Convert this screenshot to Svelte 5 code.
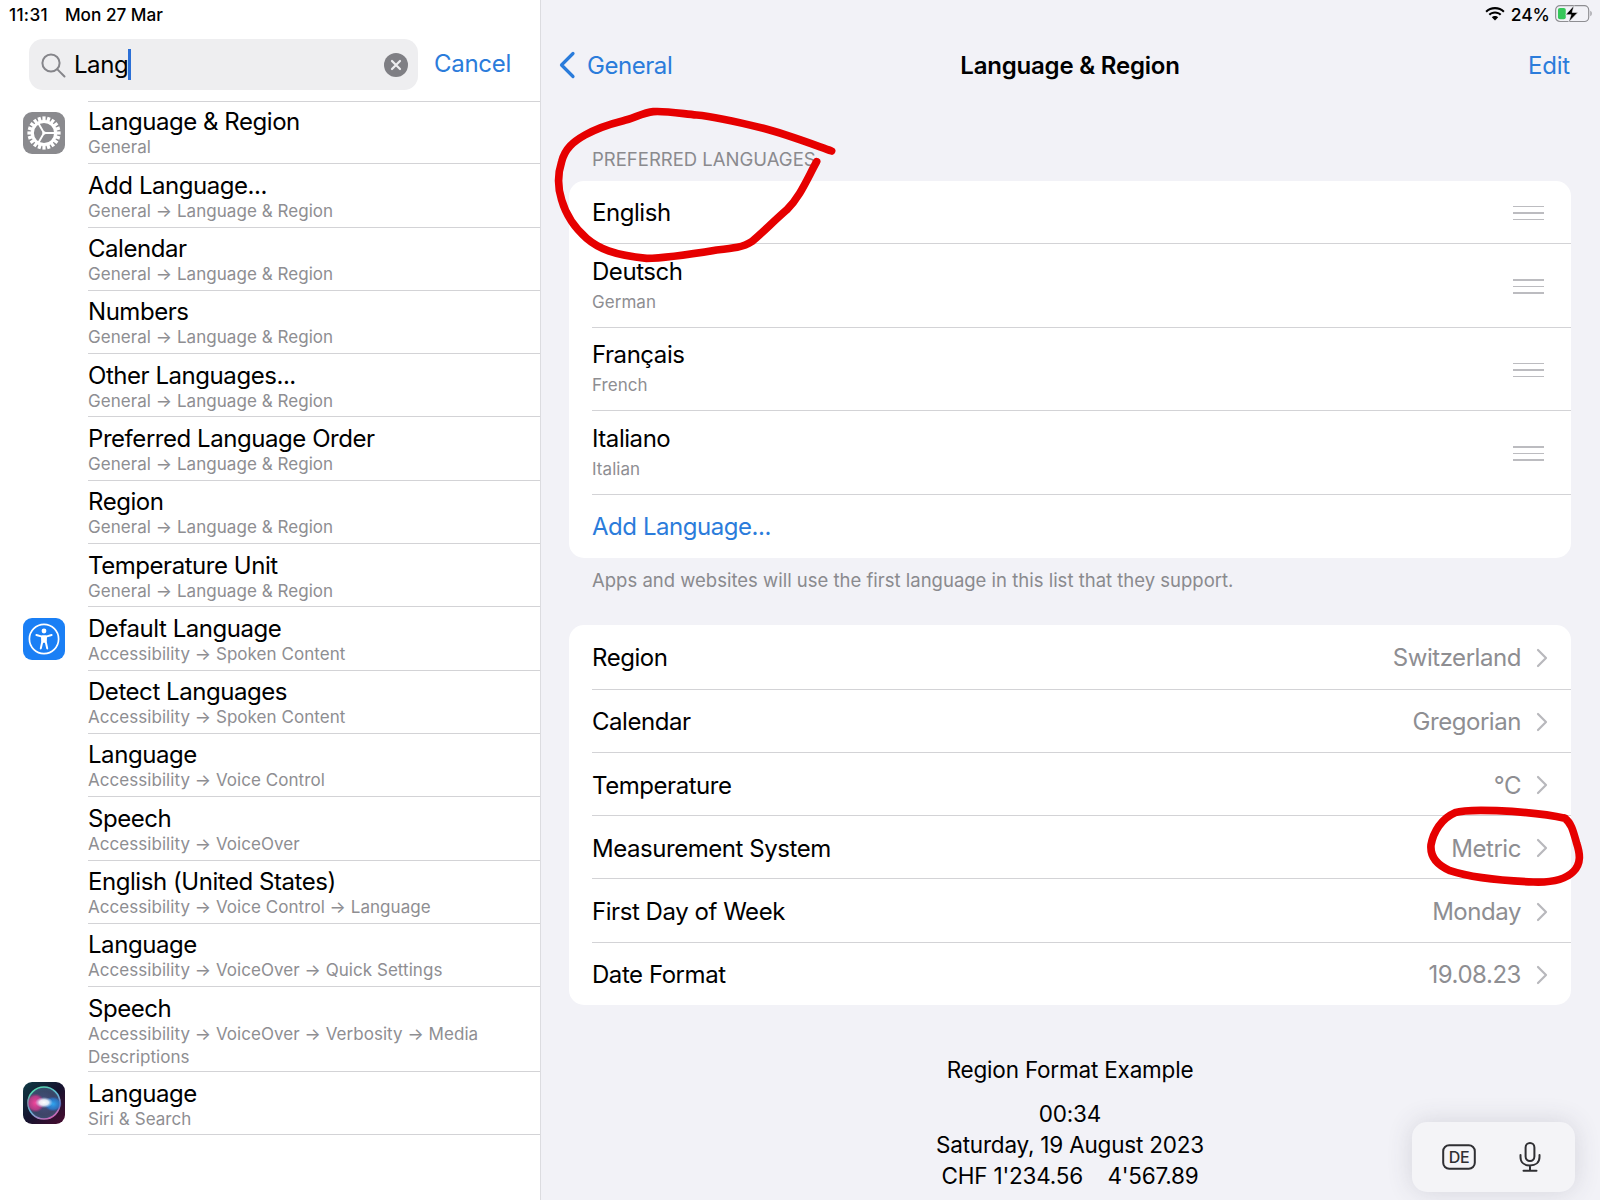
<script>
  const results = [
    { t: 'Language & Region', s: 'General', icon: 'gear' },
    { t: 'Add Language...', s: 'General → Language & Region' },
    { t: 'Calendar', s: 'General → Language & Region' },
    { t: 'Numbers', s: 'General → Language & Region' },
    { t: 'Other Languages...', s: 'General → Language & Region' },
    { t: 'Preferred Language Order', s: 'General → Language & Region' },
    { t: 'Region', s: 'General → Language & Region' },
    { t: 'Temperature Unit', s: 'General → Language & Region' },
    { t: 'Default Language', s: 'Accessibility → Spoken Content', icon: 'access' },
    { t: 'Detect Languages', s: 'Accessibility → Spoken Content' },
    { t: 'Language', s: 'Accessibility → Voice Control' },
    { t: 'Speech', s: 'Accessibility → VoiceOver' },
    { t: 'English (United States)', s: 'Accessibility → Voice Control → Language' },
    { t: 'Language', s: 'Accessibility → VoiceOver → Quick Settings' },
    { t: 'Speech', s: 'Accessibility → VoiceOver → Verbosity → Media Descriptions', tall: true },
    { t: 'Language', s: 'Siri & Search', icon: 'siri' }
  ];
  const langs = [
    { t: 'English' },
    { t: 'Deutsch', s: 'German' },
    { t: 'Français', s: 'French' },
    { t: 'Italiano', s: 'Italian' }
  ];
  const regionRows = [
    ['Region', 'Switzerland'],
    ['Calendar', 'Gregorian'],
    ['Temperature', '°C'],
    ['Measurement System', 'Metric'],
    ['First Day of Week', 'Monday'],
    ['Date Format', '19.08.23']
  ];
  const teeth = Array.from({ length: 20 }, (_, i) => i * 18);
</script>

<div class="screen">
  <aside class="side">
    <div class="status-left"><span class="time">11:31</span><span>Mon 27 Mar</span></div>
    <div class="search-row">
      <div class="search">
        <svg class="mag" viewBox="0 0 26 26" width="26" height="26" fill="none" stroke="#85858a" stroke-width="2">
          <circle cx="11" cy="11" r="8.6" />
          <path d="M17.4 17.4 L24.5 24.5" stroke-linecap="round" />
        </svg>
        <span class="query">Lang</span><span class="caret"></span>
        <svg class="clear" viewBox="0 0 24 24" width="24" height="24">
          <circle cx="12" cy="12" r="12" fill="#7f7f84" />
          <path d="M8 8 L16 16 M16 8 L8 16" stroke="#ededf0" stroke-width="2.2" stroke-linecap="round" />
        </svg>
      </div>
      <span class="cancel">Cancel</span>
    </div>
    <ul class="results">
      {#each results as r}
        <li class="result" class:tall={r.tall}>
          <div class="gutter">
            {#if r.icon === 'gear'}
              <svg viewBox="0 0 42 42" width="42" height="42">
                <rect width="42" height="42" rx="9" fill="#8a8a8e" />
                {#each teeth as a}
                  <rect x="19.4" y="4.4" width="3.2" height="5" fill="#fff" transform="rotate({a} 21 21)" />
                {/each}
                <circle cx="21" cy="21" r="11.6" fill="none" stroke="#fff" stroke-width="3" />
                <circle cx="21" cy="21" r="1.8" fill="#fff" />
                <path d="M21 21 L32 21 M21 21 L15.5 11.5 M21 21 L15.5 30.5" stroke="#fff" stroke-width="1.9" />
              </svg>
            {:else if r.icon === 'access'}
              <svg viewBox="0 0 42 42" width="42" height="42">
                <rect width="42" height="42" rx="9" fill="#1a7ff5" />
                <circle cx="21" cy="21" r="14.6" fill="none" stroke="#fff" stroke-width="1.7" />
                <circle cx="21" cy="13" r="2.4" fill="#fff" />
                <path d="M13.4 17 L19 18.6 L23 18.6 L28.6 17" fill="none" stroke="#fff" stroke-width="2" stroke-linecap="round" stroke-linejoin="round" />
                <path d="M19 18.6 H23 L22.8 24 L24.2 30.4 M19 18.6 L19.2 24 L17.8 30.4 M19.2 23.6 H22.8 M21 18.6 V24" fill="none" stroke="#fff" stroke-width="2" stroke-linecap="round" stroke-linejoin="round" />
              </svg>
            {:else if r.icon === 'siri'}
              <svg viewBox="0 0 42 42" width="42" height="42">
                <defs>
                  <linearGradient id="sbg" x1="0" y1="0" x2="1" y2="1">
                    <stop offset="0" stop-color="#0e3a44" />
                    <stop offset="0.5" stop-color="#15132e" />
                    <stop offset="1" stop-color="#4a0c30" />
                  </linearGradient>
                  <radialGradient id="sdisc">
                    <stop offset="0" stop-color="#5a6aa0" />
                    <stop offset="0.75" stop-color="#4a5a80" />
                    <stop offset="1" stop-color="#44688a" />
                  </radialGradient>
                  <radialGradient id="score">
                    <stop offset="0" stop-color="#fff" />
                    <stop offset="0.5" stop-color="#f4f8ff" stop-opacity="0.9" />
                    <stop offset="1" stop-color="#b8dcff" stop-opacity="0" />
                  </radialGradient>
                  <radialGradient id="spink">
                    <stop offset="0" stop-color="#f4479c" />
                    <stop offset="0.7" stop-color="#d83a90" stop-opacity="0.75" />
                    <stop offset="1" stop-color="#c02a80" stop-opacity="0" />
                  </radialGradient>
                  <radialGradient id="sblue">
                    <stop offset="0" stop-color="#2fa6f0" />
                    <stop offset="0.7" stop-color="#2a80d8" stop-opacity="0.75" />
                    <stop offset="1" stop-color="#2a60c0" stop-opacity="0" />
                  </radialGradient>
                  <linearGradient id="sring" x1="0.2" y1="0" x2="0.8" y2="1">
                    <stop offset="0" stop-color="#56dba8" />
                    <stop offset="0.5" stop-color="#62b4d8" />
                    <stop offset="1" stop-color="#d85ab0" />
                  </linearGradient>
                </defs>
                <rect width="42" height="42" rx="9" fill="url(#sbg)" />
                <circle cx="21" cy="21" r="16" fill="url(#sdisc)" fill-opacity="0.7" stroke="url(#sring)" stroke-width="1.6" />
                <ellipse cx="12.5" cy="21" rx="9" ry="9.5" fill="url(#spink)" />
                <ellipse cx="30" cy="22" rx="9" ry="7.5" fill="url(#sblue)" />
                <ellipse cx="21" cy="20.5" rx="9" ry="5.5" fill="url(#score)" />
              </svg>
            {/if}
          </div>
          <div class="rtext">
            <div class="rtitle">{r.t}</div>
            <div class="rsub">{r.s}</div>
          </div>
        </li>
      {/each}
    </ul>
  </aside>

  <main class="detail">
    <div class="status-right">
      <svg viewBox="0 0 20 15" width="20" height="15" fill="#000">
        <path d="M10 2.2 C13.2 2.2 16 3.4 18.2 5.4 L19.6 3.9 C17 1.5 13.7 0 10 0 C6.3 0 3 1.5 0.4 3.9 L1.8 5.4 C4 3.4 6.8 2.2 10 2.2 Z" />
        <path d="M10 6.6 C11.9 6.6 13.6 7.3 14.9 8.5 L16.4 7 C14.7 5.4 12.5 4.4 10 4.4 C7.5 4.4 5.3 5.4 3.6 7 L5.1 8.5 C6.4 7.3 8.1 6.6 10 6.6 Z" />
        <path d="M10 9 C8.8 9 7.6 9.5 6.8 10.2 L10 13.6 L13.2 10.2 C12.4 9.5 11.2 9 10 9 Z" />
      </svg>
      <span class="pct">24%</span>
      <svg viewBox="0 0 40 18" width="39" height="17.5">
        <rect x="0.6" y="0.6" width="34" height="16.4" rx="4.5" fill="none" stroke="#8e8e92" stroke-width="1.2" />
        <rect x="3" y="3" width="8" height="11.6" rx="2" fill="#35c759" />
        <path d="M36.4 6 C38 6.6 38 11 36.4 11.6 Z" fill="#8e8e92" />
        <path d="M19.5 0.5 L11 10 L16.5 10 L14 17.5 L23.5 7.6 L17.6 7.6 Z" fill="#000" stroke="#f2f2f7" stroke-width="0.6" />
      </svg>
    </div>
    <nav class="navbar">
      <div class="back">
        <svg viewBox="0 0 18 28" width="18" height="28" fill="none" stroke="#2b7cdb" stroke-width="3.2" stroke-linecap="round" stroke-linejoin="round">
          <path d="M15 2.5 L3.5 14 L15 25.5" />
        </svg>
        <span>General</span>
      </div>
      <div class="navtitle">Language &amp; Region</div>
      <div class="edit">Edit</div>
    </nav>

    <div class="sechead">PREFERRED LANGUAGES</div>
    <section class="card">
      {#each langs as l}
        <div class="lang" class:two={l.s}>
          <div class="ltext">
            <div class="ltitle">{l.t}</div>
            {#if l.s}<div class="lsub">{l.s}</div>{/if}
          </div>
          <div class="handle"><i></i><i></i><i></i></div>
        </div>
      {/each}
      <div class="addlang">Add Language...</div>
    </section>
    <p class="secfoot">Apps and websites will use the first language in this list that they support.</p>

    <section class="card second">
      {#each regionRows as [k, v]}
        <div class="rrow">
          <span class="rk">{k}</span>
          <span class="rv">{v}</span>
          <svg viewBox="0 0 12 20" width="12" height="20" fill="none" stroke="#b8b8bc" stroke-width="2.2" stroke-linecap="round" stroke-linejoin="round">
            <path d="M2 2 L10 10 L2 18" />
          </svg>
        </div>
      {/each}
    </section>

    <div class="example">
      <div class="extitle">Region Format Example</div>
      <div class="exline first">00:34</div>
      <div class="exline">Saturday, 19 August 2023</div>
      <div class="exline">CHF 1'234.56 &nbsp;&nbsp; 4'567.89</div>
    </div>
  </main>

  <div class="kbd">
    <svg viewBox="0 0 34 26" width="34" height="26" fill="none">
      <rect x="1.2" y="1.2" width="31.6" height="23.6" rx="6" stroke="#2f2f33" stroke-width="2" />
      <text x="17" y="18.6" text-anchor="middle" font-size="16" font-weight="500" fill="#2f2f33" font-family="Inter, sans-serif">DE</text>
    </svg>
    <svg viewBox="0 0 22 30" width="22" height="30" fill="none" stroke="#2f2f33" stroke-width="2" stroke-linecap="round">
      <rect x="6.6" y="1" width="8.8" height="18" rx="4.4" />
      <path d="M1.5 13 V15 C1.5 20.5 5.6 23.6 11 23.6 C16.4 23.6 20.5 20.5 20.5 15 V13 M11 23.6 V28.5 M4.5 28.8 H17.5" />
    </svg>
  </div>

  <svg class="ink" viewBox="0 0 1600 1200" width="1600" height="1200" fill="none" stroke="#e60000" stroke-linecap="round" stroke-linejoin="round">
    <path transform="translate(530 90) scale(0.3333)" stroke-width="23" d="M905 183 C840 160 760 130 700 115 C640 100 560 80 500 75 C450 70 400 62 370 65 C340 68 310 85 280 92 C240 102 200 115 165 135 C130 155 105 175 95 215 C82 255 82 290 95 330 C108 375 130 410 170 445 C205 475 250 495 350 505 C400 505 500 490 560 480 C610 475 640 472 665 455 C690 435 730 395 770 360 C810 320 830 270 860 215" />
    <path transform="translate(1400 790) scale(0.3333)" stroke-width="23" d="M495 85 C440 72 360 65 290 62 C240 60 190 60 165 68 C125 85 100 125 93 165 C90 200 110 225 150 242 C210 262 300 272 400 276 C450 278 495 270 520 245 C545 220 540 190 530 160 C520 125 515 100 495 85" />
  </svg>
</div>

<style>
  :global(body) {
    margin: 0;
    background: #f2f2f7;
  }
  .screen {
    position: relative;
    width: 1600px;
    height: 1200px;
    overflow: hidden;
    display: grid;
    grid-template-columns: 541px 1fr;
    font-family: Inter, "Liberation Sans", sans-serif;
    color: #000;
    letter-spacing: -0.45px;
  }
  .side {
    background: #fff;
    border-right: 1px solid #dcdce0;
    display: flex;
    flex-direction: column;
    min-width: 0;
  }
  .status-left {
    height: 28px;
    padding-left: 9px;
    display: flex;
    align-items: center;
    gap: 17px;
    font-size: 17.2px;
    font-weight: 500;
    letter-spacing: 0;
  }
  .time {
    letter-spacing: 0.3px;
  }
  .search-row {
    height: 73px;
    padding: 11px 0 0 29px;
    box-sizing: border-box;
    display: flex;
    align-items: flex-start;
    gap: 16px;
  }
  .search {
    width: 389px;
    height: 51px;
    border-radius: 14px;
    background: #eeeef0;
    display: flex;
    align-items: center;
    padding: 0 10px 0 11px;
    box-sizing: border-box;
  }
  .query {
    margin-left: 8px;
    font-size: 24px;
  }
  .caret {
    width: 2.5px;
    height: 31px;
    background: #2b6fd6;
  }
  .clear {
    margin-left: auto;
  }
  .cancel {
    margin-top: 10px;
    font-size: 24px;
    letter-spacing: -0.3px;
    color: #2b7cdb;
  }
  .results {
    list-style: none;
    margin: 0;
    padding: 0;
  }
  .result {
    display: grid;
    grid-template-columns: 88px 1fr;
  }
  .gutter {
    padding: 11px 0 0 23px;
    box-sizing: border-box;
  }
  .rtext {
    height: 63.3px;
    box-sizing: border-box;
    border-bottom: 1px solid #d3d3d6;
    padding-top: 8.5px;
    overflow: hidden;
  }
  .result:first-child .rtext {
    border-top: 1px solid #d3d3d6;
    padding-top: 7px;
  }
  .result.tall .rtext {
    height: 85px;
  }
  .result.tall + .result .gutter {
    padding-top: 10px;
  }
  .rtitle {
    font-size: 24px;
    line-height: 25px;
    white-space: nowrap;
  }
  .rsub {
    margin-top: 2px;
    font-size: 17px;
    line-height: 23px;
    color: #8e8e92;
    letter-spacing: 0.05px;
    padding-right: 40px;
  }
  .detail {
    display: flex;
    flex-direction: column;
    padding: 0 29px 0 28px;
    min-width: 0;
    background: #f2f2f7;
    position: relative;
  }
  .status-right {
    height: 28px;
    margin-right: -23px;
    display: flex;
    justify-content: flex-end;
    align-items: center;
    gap: 5px;
    font-size: 17.5px;
    font-weight: 500;
    letter-spacing: 0;
  }
  .pct {
    margin-left: 1px;
  }
  .navbar {
    height: 74px;
    display: grid;
    grid-template-columns: 1fr auto 1fr;
    align-items: center;
    margin-left: -11px;
    font-size: 24px;
  }
  .back {
    display: flex;
    align-items: center;
    gap: 11px;
    color: #2b7cdb;
  }
  .navtitle {
    font-weight: 600;
    font-size: 24px;
    letter-spacing: -0.2px;
    margin-left: 11px;
  }
  .edit {
    color: #2b7cdb;
    text-align: right;
    letter-spacing: -0.2px;
    margin-right: 1px;
  }
  .sechead {
    height: 79px;
    box-sizing: border-box;
    padding: 45px 0 0 23px;
    font-size: 18.5px;
    line-height: 24px;
    color: #8a8a8e;
    letter-spacing: 0;
  }
  .card {
    background: #fff;
    border-radius: 15px;
  }
  .lang {
    height: 62px;
    margin-left: 23px;
    display: flex;
    align-items: center;
    justify-content: space-between;
    padding-right: 27px;
    border-bottom: 1px solid #d3d3d6;
  }
  .lang.two {
    height: 82.6px;
  }
  .ltext {
    padding-top: 2px;
  }
  .ltitle {
    font-size: 24px;
    line-height: 30px;
  }
  .two .ltitle {
    margin-top: -2px;
  }
  .lsub {
    font-size: 17px;
    line-height: 23px;
    margin-top: 4px;
    color: #8e8e92;
    letter-spacing: 0.05px;
  }
  .handle {
    width: 31px;
    display: flex;
    flex-direction: column;
    gap: 5px;
    padding-top: 2px;
  }
  .handle i {
    display: block;
    height: 1.5px;
    background: #bcbcc0;
  }
  .addlang {
    height: 63px;
    padding-left: 23px;
    display: flex;
    align-items: center;
    font-size: 24px;
    color: #2b7cdb;
  }
  .secfoot {
    margin: 0;
    height: 67.5px;
    padding: 10.5px 0 0 23px;
    box-sizing: border-box;
    font-size: 18.5px;
    line-height: 24px;
    color: #8a8a8e;
    letter-spacing: 0;
  }
  .second {
    padding-left: 23px;
  }
  .rrow {
    height: 63.3px;
    box-sizing: border-box;
    display: flex;
    align-items: center;
    padding: 2px 23px 0 0;
    border-bottom: 1px solid #d3d3d6;
    font-size: 24px;
  }
  .rrow:first-child {
    height: 64.3px;
  }
  .rrow:last-child {
    height: 62.3px;
    border-bottom: 0;
  }
  .rv {
    margin-left: auto;
    margin-right: 15px;
    color: #8e8e92;
  }
  .example {
    padding-top: 49px;
    text-align: center;
    font-size: 22.5px;
    line-height: 31px;
    letter-spacing: -0.2px;
  }
  .exline.first {
    margin-top: 13px;
  }
  .kbd {
    position: absolute;
    left: 1412px;
    top: 1122px;
    width: 163px;
    height: 70px;
    box-sizing: border-box;
    border-radius: 15px;
    background: #f4f4f7;
    box-shadow: 0 0 26px rgba(60, 60, 80, 0.16);
    display: flex;
    align-items: center;
    justify-content: space-between;
    padding: 0 34px 0 30px;
  }
  .ink {
    position: absolute;
    left: 0;
    top: 0;
    pointer-events: none;
  }
</style>
